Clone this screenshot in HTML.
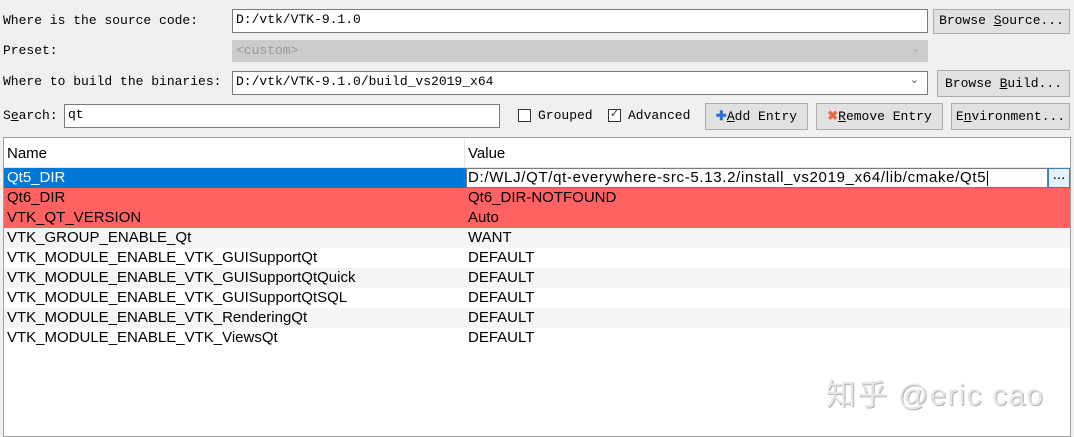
<!DOCTYPE html>
<html><head><meta charset="utf-8"><style>
body{margin:0;width:1074px;height:434px;background:#f0f0f0;position:relative;overflow:hidden;font-family:"Liberation Mono",monospace;font-size:13px;color:#000}
.a{position:absolute;white-space:nowrap}
.in{position:absolute;background:#fff;border:1px solid #7a7a7a;box-sizing:border-box;padding:2px 3px;white-space:nowrap}
.btn{position:absolute;background:#e1e1e1;border:1px solid #adadad;box-sizing:border-box;text-align:center;line-height:22px;white-space:nowrap}
.cb{position:absolute;width:13px;height:13px;border:1px solid #333;background:#fff;box-sizing:border-box}
.t{position:absolute;left:3px;top:137px;width:1068px;height:300px;background:#fff;border:1px solid #a0a0a0;box-sizing:border-box;font-family:"Liberation Sans",sans-serif;font-size:15px}
.r{position:absolute;left:0;width:1066px;height:20px;line-height:20px}
.r span{position:absolute}
.r .n{left:3px}.r .v{left:464px}
</style></head><body>
<div class="a" style="left:3px;top:13px">Where is the source code:</div>
<div class="in" style="left:232px;top:9px;width:696px;height:24px">D:/vtk/VTK-9.1.0</div>
<div class="btn" style="left:933px;top:9px;width:137px;height:25px">Browse <u>S</u>ource...</div>
<div class="a" style="left:3px;top:43px">Preset:</div>
<div class="a" style="left:232px;top:40px;width:696px;height:22px;background:#cccccc"><span style="position:absolute;left:4px;top:3px;color:#999">&lt;custom&gt;</span><span style="position:absolute;right:8px;top:2px;color:#aaa;font-size:11px">&#8964;</span></div>
<div class="a" style="left:3px;top:74px">Where to build the binaries:</div>
<div class="in" style="left:232px;top:71px;width:696px;height:24px">D:/vtk/VTK-9.1.0/build_vs2019_x64<span style="position:absolute;right:8px;top:1px;color:#555;font-size:11px">&#8964;</span></div>
<div class="btn" style="left:937px;top:70px;width:133px;height:27px;line-height:25px">Browse <u>B</u>uild...</div>
<div class="a" style="left:3px;top:108px">S<u>e</u>arch:</div>
<div class="in" style="left:64px;top:104px;width:436px;height:24px">qt</div>
<div class="cb" style="left:518px;top:109px"></div>
<div class="a" style="left:538px;top:108px">Grouped</div>
<div class="cb" style="left:608px;top:109px;font-size:11px;line-height:10px;text-align:center;color:#333">&#10003;</div>
<div class="a" style="left:628px;top:108px">Advanced</div>
<div class="btn" style="left:705px;top:103px;width:103px;height:27px;line-height:25px"><span style="color:#2a6fd6;font-weight:bold">&#10010;</span><u>A</u>dd Entry</div>
<div class="btn" style="left:816px;top:103px;width:127px;height:27px;line-height:25px"><span style="color:#e86a4a;font-weight:bold">&#10006;</span><u>R</u>emove Entry</div>
<div class="btn" style="left:951px;top:103px;width:119px;height:27px;line-height:25px">E<u>n</u>vironment...</div>
<div class="t">
<div class="r" style="top:2px;height:27px;line-height:28px;border-bottom:1px solid #e5e5e5"><span class="n">Name</span><span style="position:absolute;left:460px;top:0;height:27px;border-left:1px solid #e5e5e5"></span><span class="v">Value</span></div>
<div class="r" style="top:30px;background:#0078d7;color:#fff"><span class="n">Qt5_DIR</span></div>
<div class="r" style="top:30px;left:462px;width:582px;background:#fff;border:1px solid #7a7a7a;box-sizing:border-box;line-height:18px;color:#000"><span style="left:1px;letter-spacing:0.68px">D:/WLJ/QT/qt-everywhere-src-5.13.2/install_vs2019_x64/lib/cmake/Qt5</span><span style="left:520px;top:2px;height:15px;border-left:1px solid #000"></span></div>
<div class="r" style="top:30px;left:1044px;width:22px;background:#e5f1fb;border:1px solid #3c7fb1;box-sizing:border-box;line-height:12px;text-align:center">...</div>
<div class="r" style="top:50px;background:#ff6262"><span class="n">Qt6_DIR</span><span class="v">Qt6_DIR-NOTFOUND</span></div>
<div class="r" style="top:70px;background:#ff6262"><span class="n">VTK_QT_VERSION</span><span class="v">Auto</span></div>
<div class="r" style="top:90px;background:#f5f5f5"><span class="n">VTK_GROUP_ENABLE_Qt</span><span class="v">WANT</span></div>
<div class="r" style="top:110px"><span class="n">VTK_MODULE_ENABLE_VTK_GUISupportQt</span><span class="v">DEFAULT</span></div>
<div class="r" style="top:130px;background:#f5f5f5"><span class="n">VTK_MODULE_ENABLE_VTK_GUISupportQtQuick</span><span class="v">DEFAULT</span></div>
<div class="r" style="top:150px"><span class="n">VTK_MODULE_ENABLE_VTK_GUISupportQtSQL</span><span class="v">DEFAULT</span></div>
<div class="r" style="top:170px;background:#f5f5f5"><span class="n">VTK_MODULE_ENABLE_VTK_RenderingQt</span><span class="v">DEFAULT</span></div>
<div class="r" style="top:190px"><span class="n">VTK_MODULE_ENABLE_VTK_ViewsQt</span><span class="v">DEFAULT</span></div>
</div>
<div class="a" style="left:826px;top:370px;font-family:'Liberation Sans','Noto Sans CJK SC',sans-serif;font-size:30px;letter-spacing:1.2px;color:#e6e6e6;text-shadow:1px 1px 0 #b4b4b4">知乎 @eric cao</div>
</body></html>
